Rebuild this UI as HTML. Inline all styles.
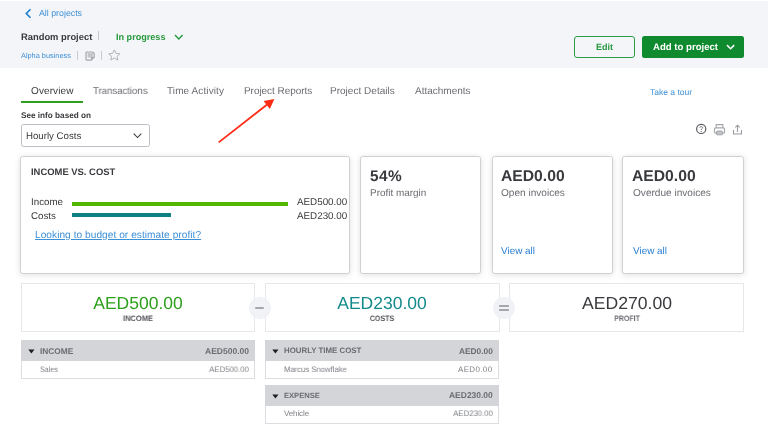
<!DOCTYPE html>
<html><head><meta charset="utf-8"><style>
html,body{margin:0;padding:0;width:768px;height:430px;overflow:hidden;background:#fff;}
body{position:relative;font-family:"Liberation Sans",sans-serif;}
.t{position:absolute;white-space:nowrap;text-rendering:geometricPrecision;will-change:transform;}
.r{position:absolute;}
svg.r{overflow:visible;}
</style></head><body>
<div class="r" style="left:0px;top:1px;width:768px;height:67px;background:#f4f5f8;"></div>
<svg class="r" style="left:24px;top:8px" width="9" height="11" viewBox="0 0 9 11"><path d="M6.5 1.2 L2.3 5.5 L6.5 9.8" fill="none" stroke="#1b7fd0" stroke-width="1.6"/></svg>
<div class="t" style="left:39.00px;top:8.85px;font-size:8.80px;line-height:8.80px;color:#3d8fd6;">All projects</div>
<div class="t" style="left:20.60px;top:33.07px;font-size:9.37px;line-height:9.37px;color:#393a3d;font-weight:700;">Random project</div>
<div class="r" style="left:98px;top:31px;width:1px;height:9px;background:#c8c9cd;"></div>
<div class="t" style="left:116.20px;top:33.31px;font-size:9.08px;line-height:9.08px;color:#26993f;font-weight:700;">In progress</div>
<svg class="r" style="left:174px;top:34px" width="10" height="7" viewBox="0 0 10 7"><path d="M1 1.1 L4.8 4.9 L8.6 1.1" fill="none" stroke="#26993f" stroke-width="1.4"/></svg>
<div class="t" style="left:20.80px;top:51.58px;font-size:7.35px;line-height:7.35px;color:#3d8fd6;">Alpha business</div>
<div class="r" style="left:77px;top:51px;width:1px;height:9px;background:#c8c9cd;"></div>
<svg class="r" style="left:84.5px;top:50.8px" width="10" height="10" viewBox="0 0 10 10"><rect x="2.6" y="2" width="5.2" height="4.6" fill="#c4c5c9"/><path d="M2 1 H6.8 Q9.2 1 9.2 3.4 V6.2 L6.2 9.2 H2 Q1 9.2 1 8.2 V2 Q1 1 2 1 Z" fill="none" stroke="#a3a5aa" stroke-width="1.2"/><path d="M9 6.4 H6.4 V9" fill="none" stroke="#a3a5aa" stroke-width="1"/></svg>
<div class="r" style="left:101px;top:51px;width:1px;height:9px;background:#c8c9cd;"></div>
<svg class="r" style="left:108.2px;top:49px" width="13" height="12" viewBox="0 0 13 12"><path d="M6.3 0.9 L8 4.4 L11.8 4.8 L9 7.4 L9.8 11 L6.3 9.1 L2.8 11 L3.6 7.4 L0.8 4.8 L4.6 4.4 Z" fill="none" stroke="#aeb0b5" stroke-width="0.95" stroke-linejoin="round"/></svg>
<div class="r" style="left:574px;top:36px;width:61px;height:22px;box-sizing:border-box;border:1.6px solid #2a9d47;border-radius:3px;"></div>
<div class="t" style="left:595.60px;top:43.38px;font-size:9.00px;line-height:9.00px;color:#26993f;font-weight:700;">Edit</div>
<div class="r" style="left:642.2px;top:36.3px;width:101.6px;height:21.8px;background:#108a2f;border-radius:2.5px;"></div>
<div class="t" style="left:652.60px;top:43.27px;font-size:9.60px;line-height:9.60px;color:#ffffff;font-weight:700;">Add to project</div>
<svg class="r" style="left:725.8px;top:44.2px" width="10" height="7" viewBox="0 0 10 7"><path d="M1 1.1 L4.6 4.7 L8.2 1.1" fill="none" stroke="#ffffff" stroke-width="1.5"/></svg>
<div class="t" style="left:30.60px;top:86.83px;font-size:10.00px;line-height:10.00px;color:#393a3d;letter-spacing:0.107px;">Overview</div>
<div class="r" style="left:21px;top:101px;width:62px;height:2px;background:#2ca01c;"></div>
<div class="t" style="left:92.60px;top:86.83px;font-size:10.00px;line-height:10.00px;color:#6b6c72;transform:scaleX(0.9583);transform-origin:left;">Transactions</div>
<div class="t" style="left:166.80px;top:86.83px;font-size:10.00px;line-height:10.00px;color:#6b6c72;letter-spacing:0.104px;">Time Activity</div>
<div class="t" style="left:243.60px;top:86.83px;font-size:10.00px;line-height:10.00px;color:#6b6c72;letter-spacing:-0.054px;">Project Reports</div>
<div class="t" style="left:330.40px;top:86.83px;font-size:10.00px;line-height:10.00px;color:#6b6c72;letter-spacing:0.021px;">Project Details</div>
<div class="t" style="left:414.60px;top:86.83px;font-size:10.00px;line-height:10.00px;color:#6b6c72;letter-spacing:-0.005px;">Attachments</div>
<div class="t" style="left:649.60px;top:87.80px;font-size:8.50px;line-height:8.50px;color:#3d8fd6;">Take a tour</div>
<div class="t" style="left:20.80px;top:112.46px;font-size:8.20px;line-height:8.20px;color:#393a3d;font-weight:700;">See info based on</div>
<div class="r" style="left:20.5px;top:124.2px;width:129.1px;height:22.5px;box-sizing:border-box;border:1px solid #babec5;border-radius:2.5px;"></div>
<div class="t" style="left:26.40px;top:132.41px;font-size:9.67px;line-height:9.67px;color:#393a3d;">Hourly Costs</div>
<svg class="r" style="left:133.3px;top:133px" width="10" height="7" viewBox="0 0 10 7"><path d="M0.7 0.7 L4.5 4.5 L8.3 0.7" fill="none" stroke="#393a3d" stroke-width="1.05"/></svg>
<svg class="r" style="left:695px;top:123px" width="12" height="12" viewBox="0 0 12 12"><circle cx="6.2" cy="5.9" r="4.6" fill="none" stroke="#55575c" stroke-width="1.15"/><path d="M4.7 4.7 C4.7 3.3 7.7 3.3 7.7 4.7 C7.7 5.7 6.2 5.6 6.2 6.9" fill="none" stroke="#6b6c72" stroke-width="0.9"/><circle cx="6.2" cy="8.4" r="0.55" fill="#6b6c72"/></svg>
<svg class="r" style="left:713px;top:123px" width="13" height="13" viewBox="0 0 13 13"><path d="M3.2 4.8 V1.6 H9.8 V4.8" fill="none" stroke="#a3a5aa" stroke-width="1.1"/><rect x="1.4" y="4.9" width="10.2" height="5.2" rx="1.3" fill="none" stroke="#a3a5aa" stroke-width="1.1"/><rect x="3.6" y="8" width="5.8" height="3.8" rx="0.6" fill="#c2c3c7" stroke="#a3a5aa" stroke-width="1"/></svg>
<svg class="r" style="left:731px;top:123px" width="13" height="13" viewBox="0 0 13 13"><path d="M2.5 7 V11 H10.5 V7" fill="none" stroke="#9a9ca1" stroke-width="1.1"/><path d="M6.5 9 V2.2 M4.3 4.4 L6.5 2.2 L8.7 4.4" fill="none" stroke="#9a9ca1" stroke-width="1.1"/></svg>
<svg class="r" style="left:210px;top:95px" width="75" height="55" viewBox="210 95 75 55"><path d="M218.7 142.4 L267.5 104.2" stroke="#ff2a14" stroke-width="1.8"/><path d="M274.3 98.9 L263.6 100.9 L269.9 108.9 Z" fill="#ff2a14"/></svg>
<div class="r" style="left:20px;top:156px;width:330px;height:118px;box-sizing:border-box;background:#fff;border:1px solid #cfd0d4;border-radius:2.5px;box-shadow:0 1px 6px rgba(0,0,0,0.13);"></div>
<div class="r" style="left:360px;top:156px;width:121px;height:118px;box-sizing:border-box;background:#fff;border:1px solid #cfd0d4;border-radius:2.5px;box-shadow:0 1px 6px rgba(0,0,0,0.13);"></div>
<div class="r" style="left:491.5px;top:156px;width:121px;height:118px;box-sizing:border-box;background:#fff;border:1px solid #cfd0d4;border-radius:2.5px;box-shadow:0 1px 6px rgba(0,0,0,0.13);"></div>
<div class="r" style="left:622px;top:156px;width:122px;height:118px;box-sizing:border-box;background:#fff;border:1px solid #cfd0d4;border-radius:2.5px;box-shadow:0 1px 6px rgba(0,0,0,0.13);"></div>
<div class="t" style="left:31.20px;top:167.21px;font-size:9.44px;line-height:9.44px;color:#393a3d;font-weight:700;">INCOME VS. COST</div>
<div class="t" style="left:31.20px;top:198.14px;font-size:9.76px;line-height:9.76px;color:#393a3d;">Income</div>
<div class="t" style="left:31.20px;top:211.74px;font-size:9.76px;line-height:9.76px;color:#393a3d;">Costs</div>
<div class="r" style="left:71.6px;top:201.6px;width:216.4px;height:4.2px;background:#53b700;"></div>
<div class="r" style="left:71.6px;top:212.6px;width:99.2px;height:4.2px;background:#0d8184;"></div>
<div class="t" style="right:421.00px;top:198.09px;font-size:9.82px;line-height:9.82px;color:#393a3d;">AED500.00</div>
<div class="t" style="right:421.00px;top:211.69px;font-size:9.82px;line-height:9.82px;color:#393a3d;">AED230.00</div>
<div class="t" style="left:34.60px;top:230.65px;font-size:10.10px;line-height:10.10px;color:#3d8fd6;letter-spacing:0.062px;text-decoration:underline;">Looking to budget or estimate profit?</div>
<div class="t" style="left:370.40px;top:168.96px;font-size:15.40px;line-height:15.40px;color:#393a3d;font-weight:700;letter-spacing:0.423px;">54%</div>
<div class="t" style="left:370.40px;top:188.78px;font-size:9.95px;line-height:9.95px;color:#6b6c72;">Profit margin</div>
<div class="t" style="left:500.80px;top:168.81px;font-size:15.70px;line-height:15.70px;color:#393a3d;font-weight:700;">AED0.00</div>
<div class="t" style="left:501.30px;top:189.26px;font-size:10.09px;line-height:10.09px;color:#6b6c72;">Open invoices</div>
<div class="t" style="left:501.20px;top:246.91px;font-size:9.91px;line-height:9.91px;color:#2a80d2;">View all</div>
<div class="t" style="left:632.10px;top:168.81px;font-size:15.70px;line-height:15.70px;color:#393a3d;font-weight:700;">AED0.00</div>
<div class="t" style="left:632.60px;top:189.26px;font-size:10.09px;line-height:10.09px;color:#6b6c72;">Overdue invoices</div>
<div class="t" style="left:632.50px;top:246.91px;font-size:9.91px;line-height:9.91px;color:#2a80d2;">View all</div>
<div class="r" style="left:21px;top:283px;width:234px;height:49px;box-sizing:border-box;background:#fff;border:1px solid #e6e7ea;"></div>
<div class="r" style="left:265px;top:283px;width:235px;height:49px;box-sizing:border-box;background:#fff;border:1px solid #e6e7ea;"></div>
<div class="r" style="left:509px;top:283px;width:235px;height:49px;box-sizing:border-box;background:#fff;border:1px solid #e6e7ea;"></div>
<div class="r" style="left:248.5px;top:297px;width:22px;height:22px;background:#f1f2f6;border-radius:50%;"></div>
<div class="r" style="left:254.7px;top:306.7px;width:9.5px;height:2.3px;background:#a5a7ae;border-radius:1px;"></div>
<div class="r" style="left:492.5px;top:297px;width:22px;height:22px;background:#f1f2f6;border-radius:50%;"></div>
<div class="r" style="left:498.8px;top:305px;width:10px;height:2.1px;background:#a5a7ae;border-radius:0.5px;"></div>
<div class="r" style="left:498.8px;top:308.8px;width:10px;height:2.2px;background:#a5a7ae;border-radius:0.5px;"></div>
<div class="t" style="left:-62.40px;width:400px;text-align:center;top:294.79px;font-size:17.50px;line-height:17.50px;color:#2ca01c;">AED500.00</div>
<div class="t" style="left:-62.30px;width:400px;text-align:center;top:314.91px;font-size:7.90px;line-height:7.90px;color:#55565b;font-weight:700;transform:scaleX(0.9542);transform-origin:center;">INCOME</div>
<div class="t" style="left:182.10px;width:400px;text-align:center;top:294.79px;font-size:17.50px;line-height:17.50px;color:#148b8b;">AED230.00</div>
<div class="t" style="left:182.20px;width:400px;text-align:center;top:314.91px;font-size:7.90px;line-height:7.90px;color:#55565b;font-weight:700;transform:scaleX(0.9015);transform-origin:center;">COSTS</div>
<div class="t" style="left:426.50px;width:400px;text-align:center;top:294.70px;font-size:17.60px;line-height:17.60px;color:#393a3d;">AED270.00</div>
<div class="t" style="left:426.50px;width:400px;text-align:center;top:314.91px;font-size:7.90px;line-height:7.90px;color:#6b6c72;font-weight:700;transform:scaleX(0.8815);transform-origin:center;">PROFIT</div>
<div class="r" style="left:21px;top:340px;width:234px;height:21px;background:#d4d5d9;"></div>
<div class="r" style="left:21px;top:361px;width:234px;height:18px;box-sizing:border-box;background:#fff;border:1px solid #dcdde1;border-top:none;"></div>
<svg class="r" style="left:28px;top:349px" width="7" height="5" viewBox="0 0 7 5"><path d="M0.3 0.5 H6.5 L3.4 4.4 Z" fill="#1f1f1f"/></svg>
<div class="t" style="left:40.20px;top:346.76px;font-size:8.32px;line-height:8.32px;color:#6a6b70;font-weight:700;">INCOME</div>
<div class="t" style="right:519.50px;top:346.60px;font-size:8.50px;line-height:8.50px;color:#6a6b70;font-weight:700;">AED500.00</div>
<div class="t" style="left:40.00px;top:366.23px;font-size:8.00px;line-height:8.00px;color:#7f8186;transform:scaleX(0.8936);transform-origin:left;">Sales</div>
<div class="t" style="right:519.50px;top:366.23px;font-size:8.00px;line-height:8.00px;color:#7f8186;transform:scaleX(0.9695);transform-origin:right;">AED500.00</div>
<div class="r" style="left:265px;top:340px;width:234px;height:21px;background:#d4d5d9;"></div>
<div class="r" style="left:265px;top:361px;width:234px;height:18px;box-sizing:border-box;background:#fff;border:1px solid #dcdde1;border-top:none;"></div>
<svg class="r" style="left:272px;top:349px" width="7" height="5" viewBox="0 0 7 5"><path d="M0.3 0.5 H6.5 L3.4 4.4 Z" fill="#1f1f1f"/></svg>
<div class="t" style="left:284.20px;top:347.15px;font-size:7.86px;line-height:7.86px;color:#6a6b70;font-weight:700;">HOURLY TIME COST</div>
<div class="t" style="right:275.50px;top:346.75px;font-size:8.33px;line-height:8.33px;color:#6a6b70;font-weight:700;">AED0.00</div>
<div class="t" style="left:284.00px;top:366.23px;font-size:8.00px;line-height:8.00px;color:#7f8186;transform:scaleX(0.9602);transform-origin:left;">Marcus Snowflake</div>
<div class="t" style="right:275.15px;top:366.23px;font-size:8.00px;line-height:8.00px;color:#7f8186;letter-spacing:0.347px;">AED0.00</div>
<div class="r" style="left:265px;top:384.5px;width:234px;height:21px;background:#d4d5d9;"></div>
<div class="r" style="left:265px;top:405.5px;width:234px;height:18px;box-sizing:border-box;background:#fff;border:1px solid #dcdde1;border-top:none;"></div>
<svg class="r" style="left:272px;top:393.5px" width="7" height="5" viewBox="0 0 7 5"><path d="M0.3 0.5 H6.5 L3.4 4.4 Z" fill="#1f1f1f"/></svg>
<div class="t" style="left:284.20px;top:391.88px;font-size:7.58px;line-height:7.58px;color:#6a6b70;font-weight:700;">EXPENSE</div>
<div class="t" style="right:275.50px;top:391.13px;font-size:8.47px;line-height:8.47px;color:#6a6b70;font-weight:700;">AED230.00</div>
<div class="t" style="left:284.00px;top:410.43px;font-size:8.00px;line-height:8.00px;color:#7f8186;letter-spacing:-0.117px;">Vehicle</div>
<div class="t" style="right:275.50px;top:410.43px;font-size:8.00px;line-height:8.00px;color:#7f8186;transform:scaleX(0.9695);transform-origin:right;">AED230.00</div>
</body></html>
